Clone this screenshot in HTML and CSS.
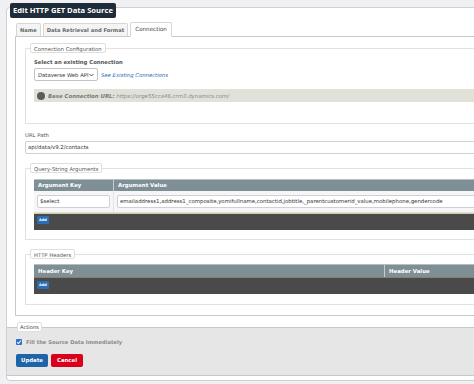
FILE: index.html
```html
<!DOCTYPE html>
<html>
<head>
<meta charset="utf-8">
<link rel="stylesheet" href="styles.css">
</head>
<body>
<div class="dialog">
  <div class="title">Edit HTTP GET Data Source</div>
  <div class="tabs">
    <div class="tab">Name</div>
    <div class="tab">Data Retrieval and Format</div>
    <div class="tab active">Connection</div>
  </div>
  <div class="panel">
    <fieldset class="group conn">
      <legend>Connection Configuration</legend>
      <div class="field-label">Select an existing Connection</div>
      <div class="select-row">
        <div class="select">Dataverse Web API <svg class="chev" viewBox="0 0 8 5" width="5" height="4"><path d="M1 1 L4 4 L7 1" fill="none" stroke="#333" stroke-width="1.4"/></svg></div>
        <span class="link">See Existing Connections</span>
      </div>
      <div class="base-url"><span class="dot"></span><b>Base Connection URL:</b>&nbsp;https://orge55cca46.crm3.dynamics.com/</div>
    </fieldset>
    <div class="label">URL Path</div>
    <div class="input path">api/data/v9.2/contacts</div>
    <fieldset class="group qs">
      <legend>Query-String Arguments</legend>
      <div class="grid">
        <div class="grid-head">
          <div class="c-key">Argument Key</div>
          <div class="c-val">Argument Value</div>
        </div>
        <div class="grid-row">
          <div class="c-key"><div class="input">$select</div></div>
          <div class="c-val"><div class="input">emailaddress1,address1_composite,yomifullname,contactid,jobtitle,_parentcustomerid_value,mobilephone,gendercode</div></div>
        </div>
        <div class="grid-foot"><span class="add">Add</span></div>
      </div>
    </fieldset>
    <fieldset class="group hh">
      <legend>HTTP Headers</legend>
      <div class="grid">
        <div class="grid-head tan">
          <div class="c-hkey">Header Key</div>
          <div class="c-hval">Header Value</div>
        </div>
        <div class="grid-foot"><span class="add">Add</span></div>
      </div>
    </fieldset>
  </div>
  <fieldset class="actions">
    <legend>Actions</legend>
    <div class="check"><span class="cb"><svg viewBox="0 0 8 8" width="6" height="6"><path d="M1.5 4.2 L3.3 6 L6.6 2" fill="none" stroke="#fff" stroke-width="1.4"/></svg></span>Fill the Source Data Immediately</div>
    <div class="buttons">
      <span class="btn update">Update</span>
      <span class="btn cancel">Cancel</span>
    </div>
  </fieldset>
</div>
</body>
</html>
```
FILE: styles.css
```css
html, body {
  margin: 0;
  padding: 0;
  background: #f0f0f3;
  overflow: hidden;
  width: 474px;
  height: 384px;
}
body {
  font-family: "DejaVu Sans", Verdana, sans-serif;
  font-size: 5.5px;
  color: #444;
}
.dialog {
  position: relative;
  margin: 7px 0 0 6px;
  width: 480px;
  background: #fff;
  border: 1px solid #cfcfd4;
  border-radius: 4px;
  padding: 14px 0 4px 8px;
  box-sizing: content-box;
}
.title {
  position: absolute;
  top: -5px;
  left: 3px;
  height: 15px;
  line-height: 15px;
  padding: 0 3px;
  background: #1f2c39;
  color: #fff;
  font-family: "Open Sans", sans-serif;
  font-weight: 700;
  font-size: 7.6px;
  border-radius: 2px;
}
.tabs {
  display: flex;
  align-items: flex-end;
  gap: 2px;
  margin-left: 1px;
  margin-bottom: -1px;
  position: relative;
  z-index: 1;
}
.tab {
  height: 12px;
  line-height: 12px;
  padding: 0 3px;
  background: #f4f4f4;
  border: 1px solid #d6d6d6;
  border-bottom-color: #c9c9c9;
  color: #666;
  font-weight: 700;
  font-size: 5.2px;
  border-radius: 2px 2px 0 0;
}
.tab.active {
  height: 13px;
  line-height: 13px;
  background: #fff;
  border-bottom-color: #fff;
  font-weight: 400;
  font-size: 5.6px;
  color: #444;
  padding: 0 4px;
}
.panel {
  border: 1px solid #c9c9c9;
  padding: 6px 0 10px 9px;
  border-right: none;
}
fieldset {
  margin: 0;
  min-width: 0;
}
.group {
  border: 1px solid #e1e1e4;
  border-right: none;
  padding: 0 0 0 8px;
}
.group legend {
  margin-left: -4px;
  padding: 0 3px;
  height: 10px;
  line-height: 10px;
  box-sizing: border-box;
  border: 1px solid #dedede;
  border-radius: 2px;
  background: #fff;
  color: #555;
  font-size: 5.3px;
}
.conn {
  padding-top: 6px;
  padding-bottom: 21px;
}
.field-label {
  font-weight: 700;
  color: #555;
  line-height: 7px;
  font-size: 5.3px;
}
.select-row {
  display: flex;
  align-items: center;
  gap: 3px;
  margin-top: 2px;
}
.select {
  width: 64px;
  height: 13px;
  box-sizing: border-box;
  border: 1px solid #c4c4c4;
  border-radius: 2px;
  display: flex;
  align-items: center;
  justify-content: space-between;
  padding: 0 3px;
  color: #333;
  font-size: 5.3px;
  background: #fff;
}
.link {
  color: #2d6cb8;
  font-style: italic;
  font-size: 5.3px;
}
.base-url {
  margin-top: 8px;
  height: 13px;
  background: #e1e1da;
  display: flex;
  align-items: center;
  padding-left: 3px;
  color: #8a8a86;
  font-style: italic;
  font-size: 5.4px;
  white-space: nowrap;
}
.base-url b {
  color: #7a7a76;
  margin-left: 3px;
}
.dot {
  width: 8px;
  height: 8px;
  border-radius: 50%;
  background: #5c5c5c;
  flex: none;
}
.label {
  margin-top: 8px;
  line-height: 7px;
  color: #555;
  font-size: 5.3px;
}
.input {
  height: 13px;
  box-sizing: border-box;
  border: 1px solid #cfcfd6;
  border-radius: 2px;
  background: #fff;
  line-height: 11px;
  padding: 0 2px;
  color: #333;
  font-size: 5.4px;
  white-space: nowrap;
  overflow: hidden;
}
.path {
  margin-top: 2px;
  margin-bottom: 9px;
}
.qs {
  padding-top: 6px;
  padding-bottom: 9px;
}
.hh {
  margin-top: 9px;
  padding-top: 5px;
  padding-bottom: 10px;
}
.grid {
  display: flex;
  flex-direction: column;
}
.grid-head {
  display: flex;
  height: 12px;
  box-sizing: border-box;
  background: #7f8f96;
  border-top: 1px solid #b5bec2;
  color: #fff;
  font-weight: 700;
  font-size: 5.4px;
  line-height: 11px;
}
.grid-head.tan {
  height: 14px;
  line-height: 12px;
  border-bottom: 1px solid #8d7d64;
}
.c-key {
  width: 80px;
  box-sizing: border-box;
  padding: 0 4px;
  border-right: 1px solid #c4ccd0;
}
.c-val {
  flex: 1;
  padding: 0 4px;
}
.c-hkey {
  width: 351px;
  box-sizing: border-box;
  padding: 0 4px;
  border-right: 1px solid #c4ccd0;
}
.c-hval {
  flex: 1;
  padding: 0 4px;
}
.grid-row {
  display: flex;
  height: 22px;
  box-sizing: border-box;
  background: #f6f6f9;
  border-bottom: 1px solid #dcdcef;
  align-items: center;
}
.grid-row .c-key {
  height: 100%;
  display: flex;
  align-items: center;
  padding: 0 3px 0 3px;
  border-right: 1px solid #e4e4ea;
}
.grid-row .c-key .input {
  width: 100%;
}
.grid-row .c-val {
  padding: 0 0 0 3px;
  min-width: 0;
}
.grid-foot {
  height: 17px;
  box-sizing: border-box;
  background: #4a4a4a;
  border-top: 1px solid #d8cc8e;
  display: flex;
  align-items: center;
  padding-left: 3px;
}
.grid-row + .grid-foot {
  padding-bottom: 4px;
}
.hh .grid-foot {
  height: 16px;
  border-top: none;
  padding-bottom: 3px;
}
.add {
  background: #2b6eb6;
  color: #fff;
  font-weight: 700;
  font-size: 3.6px;
  padding: 0 2px;
  height: 8px;
  line-height: 8px;
  border-radius: 1px;
}
.actions {
  margin: 6px 0 0 -8px;
  border: none;
  border-top: 1px solid #c8c8c8;
  border-bottom: 1px solid #c8c8c8;
  background: #e6e6e6;
  padding: 6px 0 8px 9px;
}
.actions legend {
  margin-left: 1px;
  padding: 0 2px;
  height: 10px;
  line-height: 9px;
  box-sizing: border-box;
  border: 1px solid #dedede;
  border-radius: 2px;
  background: #fff;
  color: #444;
  font-size: 5.2px;
}
.check {
  display: flex;
  align-items: center;
  gap: 4px;
  height: 7px;
  color: #8a8a8a;
  font-weight: 700;
  font-size: 5.2px;
}
.cb {
  width: 6px;
  height: 6px;
  background: #2b6fd0;
  border-radius: 1px;
  display: flex;
  align-items: center;
  justify-content: center;
}
.cb svg {
  display: block;
}
.buttons {
  display: flex;
  gap: 3px;
  margin-top: 9px;
}
.btn {
  width: 32px;
  height: 13px;
  line-height: 13px;
  text-align: center;
  color: #fff;
  font-weight: 700;
  font-size: 5.4px;
  border-radius: 2px;
}
.update {
  background: #1f63a8;
}
.cancel {
  background: #d8001b;
}
```
